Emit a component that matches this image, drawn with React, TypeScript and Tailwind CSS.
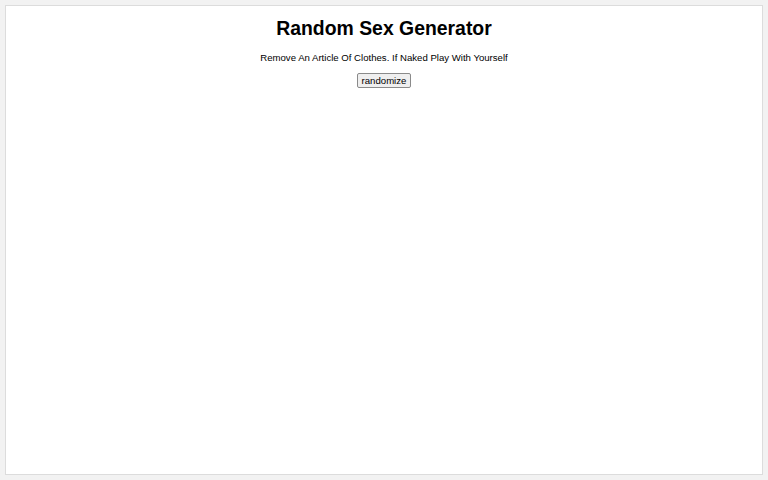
export default function App() {
  return (
    <div className="h-[480px] w-[768px] bg-[#f2f2f2] p-[5px] font-['Liberation_Sans',Arial,sans-serif]">
      <div className="flex h-[470px] flex-col items-center border border-[#dcdcdc] bg-white">
        <h1 className="mt-[10px] text-[19.4px] font-bold leading-[24px] text-black">Random Sex Generator</h1>
        <p className="mt-[12px] text-[9.6px] leading-[12px] text-black">
          Remove An Article Of Clothes. If Naked Play With Yourself
        </p>
        <button className="mt-[9px] h-[15px] rounded-[2px] border border-[#8a8a8a] bg-[#efefef] px-[4px] text-[9.6px] leading-[12px] text-black">
          randomize
        </button>
      </div>
    </div>
  );
}
